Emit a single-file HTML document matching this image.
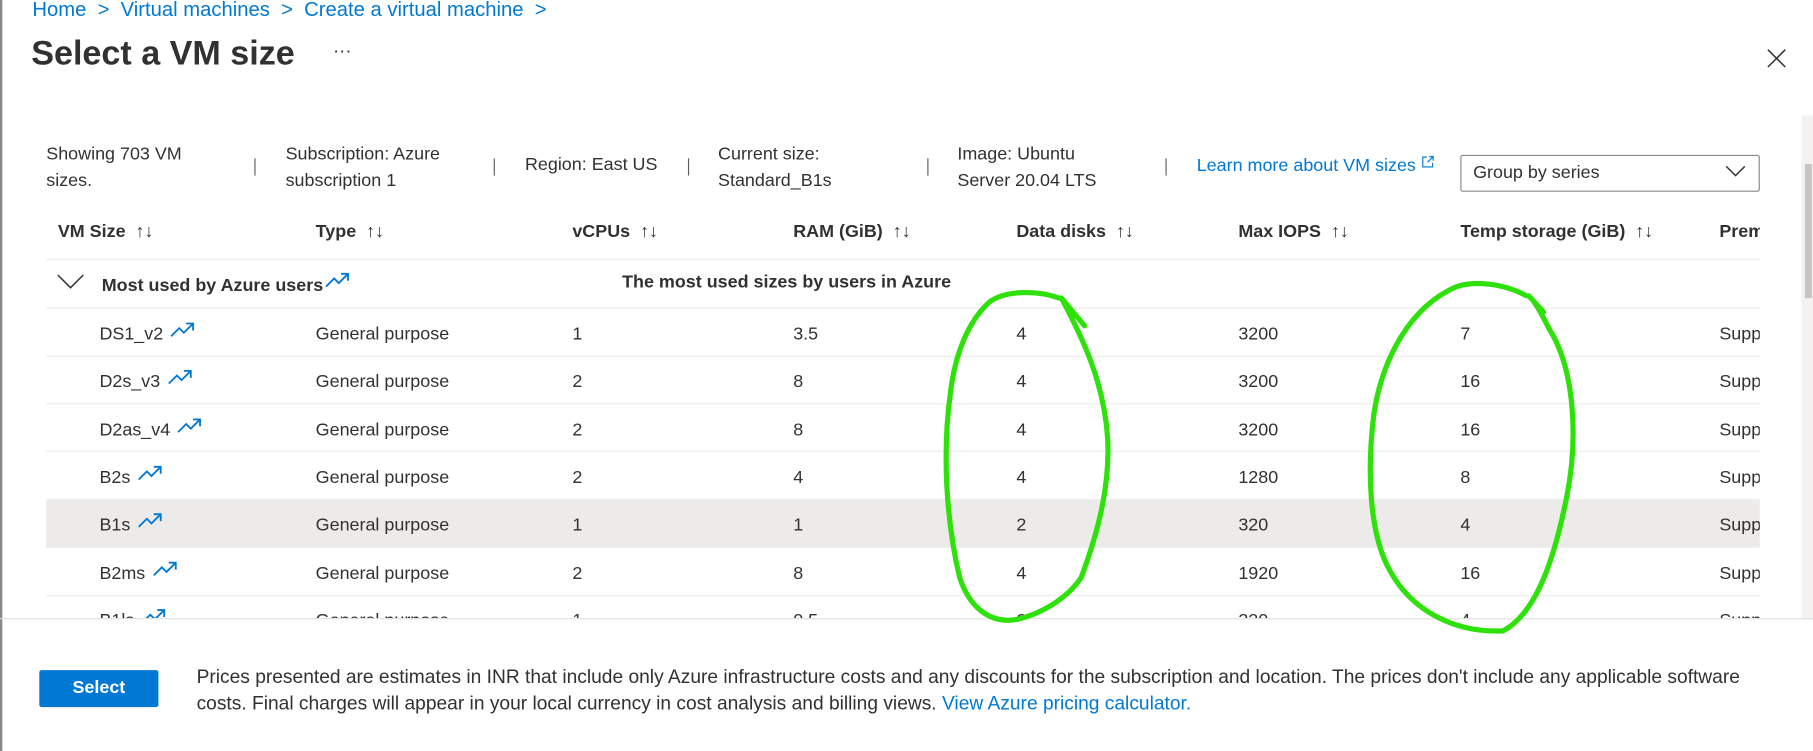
<!DOCTYPE html>
<html><head><meta charset="utf-8"><style>
html,body{margin:0;padding:0;background:#fff;overflow:hidden}
body{width:1813px;height:751px;position:relative}
#s{position:absolute;left:0;top:0;width:1568px;height:650px;transform:scale(1.15625,1.1554);transform-origin:0 0;font-family:"Segoe UI","Liberation Sans",sans-serif;color:#323130;font-size:15.5px}
.a{position:absolute;white-space:nowrap}
.b{color:#0078d4}
.h{font-weight:600}
.ln{position:absolute;left:40px;width:1482px;height:1px;background:#edebe9}
.sep{position:absolute;width:1px;height:15px;background:#605e5c;top:137px}
.ic{display:inline-block;vertical-align:middle;margin-left:6px}
</style></head><body><div id="s">
<div style="position:absolute;left:0;top:0;width:2px;height:650px;background:#8a8886"></div>
<div class="a b" style="left:28px;top:-2px;font-size:17.5px">Home &nbsp;&gt;&nbsp; Virtual machines &nbsp;&gt;&nbsp; Create a virtual machine &nbsp;&gt;</div>
<div class="a h" style="left:27px;top:30px;font-size:29.5px">Select a VM size</div>
<div class="a" style="left:288px;top:36px;font-size:16px">···</div>
<svg class="a" style="left:1528px;top:42px" width="17" height="17"><path d="M1 1L16 16M16 1L1 16" stroke="#323130" stroke-width="1.3"/></svg>
<div style="position:absolute;left:1558px;top:100px;width:10px;height:436px;background:#f3f2f1"></div>
<div style="position:absolute;left:1561px;top:142px;width:6px;height:116px;background:#c8c6c4"></div>

<div class="a" style="left:40px;top:122px;line-height:23px">Showing 703 VM<br>sizes.</div>
<div class="sep" style="left:220px"></div>
<div class="a" style="left:247px;top:122px;line-height:23px">Subscription: Azure<br>subscription 1</div>
<div class="sep" style="left:427px"></div>
<div class="a" style="left:454px;top:134px">Region: East US</div>
<div class="sep" style="left:595px"></div>
<div class="a" style="left:621px;top:122px;line-height:23px">Current size:<br>Standard_B1s</div>
<div class="sep" style="left:802px"></div>
<div class="a" style="left:828px;top:122px;line-height:23px">Image: Ubuntu<br>Server 20.04 LTS</div>
<div class="sep" style="left:1008px"></div>
<div class="a b" style="left:1035px;top:134px">Learn more about VM sizes <svg width="12" height="12" style="vertical-align:2px"><path d="M5 2H1.5V10.5H10V7M7 1.5H10.5V5M10.5 1.5L5.5 6.5" stroke="#0078d4" fill="none"/></svg></div>
<div style="position:absolute;left:1263px;top:134px;width:257px;height:30px;border:1px solid #8a8886;border-radius:2px"></div>
<div class="a" style="left:1274px;top:141px">Group by series</div>
<svg class="a" style="left:1492px;top:143px" width="18" height="11"><path d="M1 1L9 9L17 1" stroke="#323130" fill="none" stroke-width="1.3"/></svg>

<div class="a h" style="left:50px;top:192px">VM Size &nbsp;↑↓</div>
<div class="a h" style="left:273px;top:192px">Type &nbsp;↑↓</div>
<div class="a h" style="left:495px;top:192px">vCPUs &nbsp;↑↓</div>
<div class="a h" style="left:686px;top:192px">RAM (GiB) &nbsp;↑↓</div>
<div class="a h" style="left:879px;top:192px">Data disks &nbsp;↑↓</div>
<div class="a h" style="left:1071px;top:192px">Max IOPS &nbsp;↑↓</div>
<div class="a h" style="left:1263px;top:192px">Temp storage (GiB) &nbsp;↑↓</div>
<div class="a h" style="left:1487px;top:192px;width:35px;overflow:hidden">Premium</div>
<div class="ln" style="top:224px"></div>
<svg class="a" style="left:49px;top:237px" width="24" height="14"><path d="M1 1L12 12L23 1" stroke="#323130" fill="none" stroke-width="1.3"/></svg>
<div class="a h" style="left:88px;top:235px">Most used by Azure users<svg class="ic" width="22" height="14" style="margin-left:1px;vertical-align:3px"><path d="M1 13L8 6L12 10L20 2M14 2H20V8" stroke="#0078d4" fill="none" stroke-width="1.6"/></svg></div>
<div class="a h" style="left:538px;top:236px">The most used sizes by users in Azure</div>
<div class="ln" style="top:266px"></div>

<div style="position:absolute;left:0;top:267px;width:1568px;height:268px;overflow:hidden">
<div style="position:absolute;left:40px;top:165px;width:1482px;height:42px;background:#edebe9"></div>
<div class="ln" style="top:41px"></div><div class="ln" style="top:82px"></div><div class="ln" style="top:123px"></div><div class="ln" style="top:206px"></div><div class="ln" style="top:248px"></div>
</div>
<div style="position:absolute;left:0;top:267px;width:1568px;height:268px;overflow:hidden" id="rows"></div>
<div style="position:absolute;left:0;top:535px;width:1568px;height:1px;background:#e1dfdd"></div>

<svg class="a" style="left:0;top:0" width="1568" height="650"><g fill="none" stroke="#2ee10a" stroke-width="4.5" stroke-linecap="round" stroke-linejoin="round"><path d="M916 258C900 252 870 250 855 262C838 278 826 305 822 340C815 390 818 450 830 500C840 530 860 540 880 536C905 530 925 515 935 500C950 460 960 420 958 380C955 330 935 290 918 258L938 282"/><path d="M1320 256C1300 245 1275 243 1260 248C1220 265 1195 310 1188 360C1182 410 1185 460 1200 490C1220 530 1260 548 1300 546C1330 530 1345 480 1355 430C1365 380 1362 320 1340 285C1330 265 1325 258 1322 256L1335 270"/></g></svg>

<div style="position:absolute;left:34px;top:580px;width:103px;height:32px;background:#0078d4;border-radius:2px;color:#fff;font-weight:600;text-align:center;line-height:31px">Select</div>
<div class="a" style="left:170px;top:574px;line-height:23px;font-size:16.6px">Prices presented are estimates in INR that include only Azure infrastructure costs and any discounts for the subscription and location. The prices don't include any applicable software<br>costs. Final charges will appear in your local currency in cost analysis and billing views. <span class="b">View Azure pricing calculator.</span></div>
</div>
<script>
var d=[["DS1_v2","1","3.5","4","3200","7"],["D2s_v3","2","8","4","3200","16"],["D2as_v4","2","8","4","3200","16"],["B2s","2","4","4","1280","8"],["B1s","1","1","2","320","4"],["B2ms","2","8","4","1920","16"],["B1ls","1","0.5","2","320","4"]];
var ic='<svg class="ic" width="22" height="14" style="vertical-align:2px"><path d="M1 13L8 6L12 10L20 2M14 2H20V8" stroke="#0078d4" fill="none" stroke-width="1.6"/></svg>';
var h='';d.forEach(function(r,i){var t=12+i*41.3;var x=[86,273,495,686,879,1071,1263,1487];var v=[r[0]+ic,"General purpose",r[1],r[2],r[3],r[4],r[5],"Supported"];
v.forEach(function(s,j){h+='<div class="a" style="left:'+x[j]+'px;top:'+(j==0?t-1:t+2)+'px'+(j==7?';width:35px;overflow:hidden':'')+'">'+s+'</div>';});});
document.getElementById('rows').innerHTML=h;
</script>
</body></html>
